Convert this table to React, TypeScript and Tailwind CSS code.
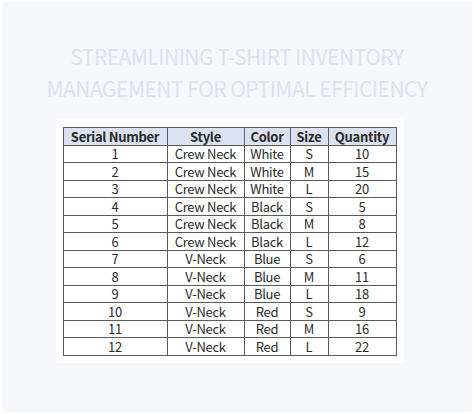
const rows = [
  { n: 1, style: 'Crew Neck', color: 'White', size: 'S', qty: 10 },
  { n: 2, style: 'Crew Neck', color: 'White', size: 'M', qty: 15 },
  { n: 3, style: 'Crew Neck', color: 'White', size: 'L', qty: 20 },
  { n: 4, style: 'Crew Neck', color: 'Black', size: 'S', qty: 5 },
  { n: 5, style: 'Crew Neck', color: 'Black', size: 'M', qty: 8 },
  { n: 6, style: 'Crew Neck', color: 'Black', size: 'L', qty: 12 },
  { n: 7, style: 'V-Neck', color: 'Blue', size: 'S', qty: 6 },
  { n: 8, style: 'V-Neck', color: 'Blue', size: 'M', qty: 11 },
  { n: 9, style: 'V-Neck', color: 'Blue', size: 'L', qty: 18 },
  { n: 10, style: 'V-Neck', color: 'Red', size: 'S', qty: 9 },
  { n: 11, style: 'V-Neck', color: 'Red', size: 'M', qty: 16 },
  { n: 12, style: 'V-Neck', color: 'Red', size: 'L', qty: 22 },
];

const cell = 'border border-[#5a5a5a] p-0 h-[17.5px] leading-none text-center whitespace-nowrap';

export default function App() {
  return (
    <div className="w-[474px] h-[414px] bg-white p-[2px] font-['Noto_Sans_CJK_SC','Noto_Sans',sans-serif]">
      <div className="w-full h-full bg-[#f6f7fb] flex flex-col items-center">
        <h1 className="mt-[38px] text-center text-[21px] leading-[32px] font-normal text-[#dfe1ea] tracking-[-0.5px]">
          STREAMLINING T-SHIRT INVENTORY
          <br />
          MANAGEMENT FOR OPTIMAL EFFICIENCY
        </h1>
        <div className="mt-[14px] ml-[-15px] bg-white px-[7px] pt-[9px] pb-[7px]">
          <table className="table-fixed border-collapse text-[13px] tracking-[-0.3px] text-[#2a2a2a]">
            <colgroup>
              <col className="w-[104px]" />
              <col className="w-[77px]" />
              <col className="w-[46px]" />
              <col className="w-[38px]" />
              <col className="w-[68px]" />
            </colgroup>
            <thead>
              <tr className="bg-[#dbe1f1] font-bold">
                <th className={cell}>Serial Number</th>
                <th className={cell}>Style</th>
                <th className={cell}>Color</th>
                <th className={cell}>Size</th>
                <th className={cell}>Quantity</th>
              </tr>
            </thead>
            <tbody>
              {rows.map((r) => (
                <tr key={r.n}>
                  <td className={cell}>{r.n}</td>
                  <td className={cell}>{r.style}</td>
                  <td className={cell}>{r.color}</td>
                  <td className={cell}>{r.size}</td>
                  <td className={cell}>{r.qty}</td>
                </tr>
              ))}
            </tbody>
          </table>
        </div>
      </div>
    </div>
  );
}
